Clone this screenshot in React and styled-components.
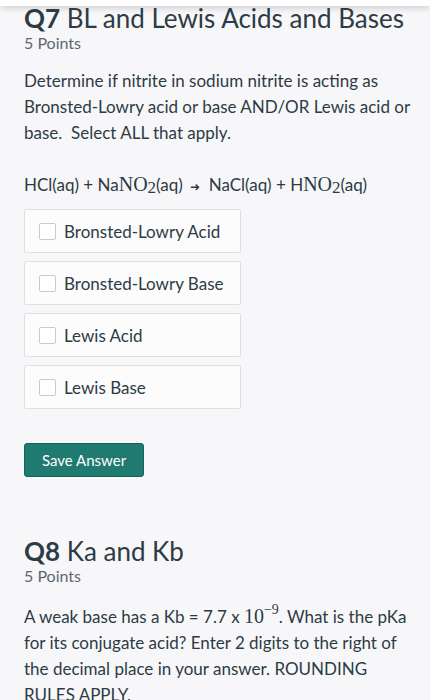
import React from "react";
import styled, { createGlobalStyle } from "styled-components";

const GlobalStyle = createGlobalStyle`
  html, body {
    margin: 0;
    padding: 0;
    background: #f7f7f9;
  }
  body {
    font-family: Lato, "Liberation Sans", sans-serif;
    color: #2d3b45;
  }
`;

const TopBar = styled.div`
  height: 6px;
  background: #ffffff;
  box-shadow: 0 2px 6px rgba(0, 0, 0, 0.18);
`;

const Page = styled.div`
  padding: 0 14px 0 24px;
`;

const Question = styled.section`
  padding-top: ${(p) => p.top}px;
`;

const Title = styled.h2`
  margin: 0;
  font-size: 26px;
  font-weight: 400;
  line-height: 24px;
  white-space: nowrap;
  color: #2d3b45;

  b {
    font-weight: 700;
  }
`;

const Points = styled.div`
  margin-top: 3px;
  font-size: 16px;
  line-height: 20px;
  color: #5b6770;
`;

const Text = styled.p`
  margin: ${(p) => p.gap || 15}px 0 0;
  font-size: 17px;
  line-height: 26px;
  color: #2d3b45;
`;

const Equation = styled.p`
  margin: 27px 0 0;
  font-size: 17px;
  line-height: 24px;
  color: #2d3b45;
`;

const Serif = styled.span`
  font-family: "Liberation Serif", serif;
  font-size: 20px;
  line-height: 0;
`;

const Sub = styled.span`
  font-family: "Liberation Serif", serif;
  font-size: 17px;
  line-height: 0;
  vertical-align: -2px;
`;

const Sup = styled.sup`
  font-family: "Liberation Serif", serif;
  font-size: 14px;
  vertical-align: 9px;
  line-height: 0;
`;

const Arrow = styled.span`
  display: inline-block;
  margin: 0 9px 0 7px;
  font-size: 12px;
  line-height: 0;
`;

const Options = styled.div`
  margin-top: 12px;
  display: flex;
  flex-direction: column;
  gap: 8px;
`;

const Option = styled.label`
  box-sizing: border-box;
  width: 217px;
  height: 44px;
  display: flex;
  align-items: center;
  gap: 8px;
  padding-left: 14px;
  background: #fcfcfd;
  border: 1px solid #dfe0e4;
  border-radius: 2px;
  font-size: 17px;
  color: #2d3b45;
`;

const Box = styled.span`
  box-sizing: border-box;
  width: 17px;
  height: 17px;
  border: 1px solid #c7cbcf;
  border-radius: 2px;
  background: #ffffff;
`;

const SaveButton = styled.button`
  display: block;
  box-sizing: border-box;
  margin-top: 34px;
  height: 34px;
  padding: 0 17px;
  background: #1f7a70;
  border: 1px solid #176158;
  border-radius: 3px;
  color: #ffffff;
  font-family: Lato, "Liberation Sans", sans-serif;
  font-size: 15px;
`;

const options = [
  "Bronsted-Lowry Acid",
  "Bronsted-Lowry Base",
  "Lewis Acid",
  "Lewis Base",
];

export default function App() {
  return (
    <>
      <GlobalStyle />
      <TopBar />
      <Page>
        <Question top={0}>
          <Title>
            <b>Q7</b> BL and Lewis Acids and Bases
          </Title>
          <Points>5 Points</Points>
          <Text>
            Determine if nitrite in sodium nitrite is acting as Bronsted-Lowry
            acid or base AND/OR Lewis acid or base.&nbsp; Select ALL that apply.
          </Text>
          <Equation>
            HCl(aq) + Na<Serif>NO</Serif>
            <Sub>2</Sub>(aq)<Arrow>➜</Arrow>NaCl(aq) + H<Serif>NO</Serif>
            <Sub>2</Sub>(aq)
          </Equation>
          <Options>
            {options.map((o) => (
              <Option key={o}>
                <Box />
                {o}
              </Option>
            ))}
          </Options>
          <SaveButton>Save Answer</SaveButton>
        </Question>
        <Question top={62}>
          <Title>
            <b>Q8</b> Ka and Kb
          </Title>
          <Points>5 Points</Points>
          <Text gap={18}>
            A weak base has a Kb = 7.7 x <Serif>10</Serif>
            <Sup>−9</Sup>. What is the pKa for its conjugate acid? Enter 2
            digits to the right of the decimal place in your answer. ROUNDING
            RULES APPLY.
          </Text>
        </Question>
      </Page>
    </>
  );
}
